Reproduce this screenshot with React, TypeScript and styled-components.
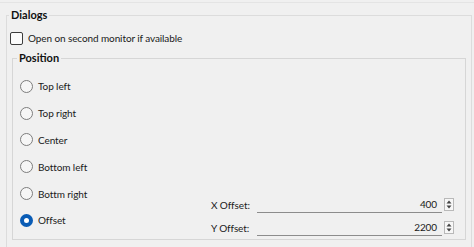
import React from 'react';
import styled, { createGlobalStyle } from 'styled-components';

const GlobalStyle = createGlobalStyle`
  html, body {
    margin: 0;
    padding: 0;
    background: #f0f0f0;
  }
  body {
    font-family: "Lato", "Noto Sans", sans-serif;
    font-size: 10px;
    letter-spacing: -0.1px;
    color: #1a1a1a;
  }
`;

const Page = styled.div`
  width: 474px;
  height: 247px;
  box-sizing: border-box;
  border-top: 1px solid #e4e4e4;
  margin-top: 2px;
  padding: 5px 2px 0 6px;
  overflow: hidden;
`;

const Group = styled.fieldset<{ $inner?: boolean }>`
  margin: 0;
  padding: 0;
  min-width: 0;
  border: 1px solid ${(p) => (p.$inner ? '#d6d6d6' : '#dcdcdc')};
  border-radius: 0;
  box-sizing: border-box;
  height: ${(p) => (p.$inner ? '189px' : '240px')};
`;

const Legend = styled.legend<{ $inner?: boolean }>`
  margin-left: ${(p) => (p.$inner ? '4px' : '2px')};
  padding: 0 2px;
  font-weight: 700;
  font-size: 11px;
  letter-spacing: 0;
  line-height: 14px;
  color: #111;
`;

const GroupBody = styled.div<{ $inner?: boolean }>`
  display: flex;
  flex-direction: column;
  padding: ${(p) => (p.$inner ? '8px 11px 0 7px' : '9px 5px 0 5px')};
  gap: ${(p) => (p.$inner ? '0' : '6px')};
  height: 100%;
  box-sizing: border-box;
`;

const CheckRow = styled.label`
  display: flex;
  align-items: center;
  gap: 5px;
  height: 14px;
  margin-left: -2px;
`;

const CheckBox = styled.span`
  width: 11px;
  height: 11px;
  border: 1px solid #3c3c3c;
  border-radius: 2px;
  background: #fbfbfb;
  flex: none;
`;

const PositionArea = styled.div`
  display: flex;
  justify-content: space-between;
  align-items: flex-end;
`;

const RadioList = styled.div`
  display: flex;
  flex-direction: column;
`;

const RadioRow = styled.label`
  display: flex;
  align-items: center;
  gap: 5px;
  height: 26.8px;
`;

const RadioDot = styled.span<{ $checked?: boolean }>`
  width: 13px;
  height: 13px;
  box-sizing: border-box;
  border-radius: 50%;
  flex: none;
  ${(p) =>
    p.$checked
      ? `background: #fff; border: 4px solid #0a5cb5;`
      : `background: #f6f6f6; border: 1px solid #7d7d7d;`}
`;

const OffsetList = styled.div`
  display: flex;
  flex-direction: column;
  gap: 7px;
  margin-bottom: -2px;
`;

const OffsetRow = styled.div`
  display: flex;
  align-items: center;
`;

const OffsetLabel = styled.span`
  width: 46px;
`;

const Field = styled.div`
  width: 185px;
  height: 16px;
  box-sizing: border-box;
  border-bottom: 1px solid #8c8c8c;
  display: flex;
  align-items: center;
  justify-content: flex-end;
  padding-right: 5px;
`;

const Spin = styled.div`
  width: 10px;
  height: 13px;
  margin-left: 2px;
  box-sizing: border-box;
  border: 1px solid #b9b9b9;
  background: #f7f7f7;
  display: flex;
  flex-direction: column;
  align-items: center;
  justify-content: center;
`;

const SpinBox: React.FC<{ value: number }> = ({ value }) => (
  <>
    <Field>{value}</Field>
    <Spin>
      <svg width="6" height="9" viewBox="0 0 6 9">
        <path d="M3 0.5 L5.5 3.5 H0.5 Z" fill="#444" />
        <path d="M0.5 5.5 H5.5 L3 8.5 Z" fill="#444" />
      </svg>
    </Spin>
  </>
);

const positions = ['Top left', 'Top right', 'Center', 'Bottom left', 'Bottm right', 'Offset'];

const App: React.FC = () => (
  <>
    <GlobalStyle />
    <Page>
      <Group>
        <Legend>Dialogs</Legend>
        <GroupBody>
          <CheckRow>
            <CheckBox />
            Open on second monitor if available
          </CheckRow>
          <Group $inner>
            <Legend $inner>Position</Legend>
            <GroupBody $inner>
              <PositionArea>
                <RadioList>
                  {positions.map((name) => (
                    <RadioRow key={name}>
                      <RadioDot $checked={name === 'Offset'} />
                      {name}
                    </RadioRow>
                  ))}
                </RadioList>
                <OffsetList>
                  <OffsetRow>
                    <OffsetLabel>X Offset:</OffsetLabel>
                    <SpinBox value={400} />
                  </OffsetRow>
                  <OffsetRow>
                    <OffsetLabel>Y Offset:</OffsetLabel>
                    <SpinBox value={2200} />
                  </OffsetRow>
                </OffsetList>
              </PositionArea>
            </GroupBody>
          </Group>
        </GroupBody>
      </Group>
    </Page>
  </>
);

export default App;
